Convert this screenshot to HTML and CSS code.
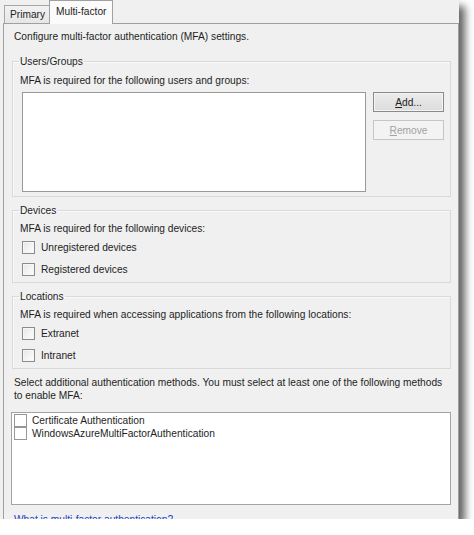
FILE: index.html
```html
<!DOCTYPE html>
<html>
<head>
<meta charset="utf-8">
<title>Multi-factor</title>
<link rel="stylesheet" href="styles.css">
</head>
<body>
<div class="dialog">
  <div class="tabs">
    <div class="tab">Primary</div>
    <div class="tab active">Multi-factor</div>
  </div>
  <div class="panel">
    <p class="intro">Configure multi-factor authentication (MFA) settings.</p>

    <fieldset class="group users">
      <legend>Users/Groups</legend>
      <div class="desc">MFA is required for the following users and groups:</div>
      <div class="users-row">
        <div class="listbox"></div>
        <div class="buttons">
          <button class="btn default" type="button"><u>A</u>dd...</button>
          <button class="btn" type="button" disabled><u>R</u>emove</button>
        </div>
      </div>
    </fieldset>

    <fieldset class="group">
      <legend>Devices</legend>
      <div class="desc">MFA is required for the following devices:</div>
      <label class="check"><span class="box"></span>Unregistered devices</label>
      <label class="check"><span class="box"></span>Registered devices</label>
    </fieldset>

    <fieldset class="group">
      <legend>Locations</legend>
      <div class="desc">MFA is required when accessing applications from the following locations:</div>
      <label class="check"><span class="box"></span>Extranet</label>
      <label class="check"><span class="box"></span>Intranet</label>
    </fieldset>

    <p class="methods-text">Select additional authentication methods. You must select at least one of the following methods to enable MFA:</p>

    <div class="methods-list">
      <label class="item"><span class="box small"></span>Certificate Authentication</label>
      <label class="item"><span class="box small"></span>WindowsAzureMultiFactorAuthentication</label>
    </div>

    <a class="link" href="#">What is multi-factor authentication?</a>
  </div>
</div>
</body>
</html>
```

FILE: styles.css
```css
html, body {
  margin: 0;
  padding: 0;
  background: #ffffff;
}

body {
  font-family: "Liberation Sans", Arial, sans-serif;
  font-size: 10.2px;
  line-height: 15px;
  color: #1e1e1e;
}

.dialog {
  width: 459px;
  height: 519px;
  overflow: hidden;
  background: #f0f0f0;
  box-shadow: 6px 6px 8px rgba(0, 0, 0, 0.62);
}

/* Tabs */
.tabs {
  display: flex;
  align-items: flex-end;
  height: 23px;
  padding-left: 4px;
  position: relative;
  z-index: 1;
}

.tab {
  height: 17px;
  line-height: 17px;
  padding: 0 4px 0 5px;
  border: 1px solid #a7a7a7;
  border-bottom: none;
  background: linear-gradient(#f2f2f2, #e6e6e6);
}

.tab.active {
  height: 23px;
  line-height: 22px;
  padding: 0 6px 0 6px;
  margin-left: -1px;
  margin-bottom: -1px;
  background: #fbfbfb;
  border-color: #a0a0a0;
}

/* Panel */
.panel {
  margin-left: 3px;
  height: 600px;
  border: 1px solid #9f9f9f;
  border-bottom: none;
  padding: 5px 7px 0 8px;
  background: #f0f0f0;
}

.intro {
  margin: 0 0 10px 2px;
}

/* Group boxes */
.group {
  margin: 0;
  border: 1px solid #d9d9d9;
  box-shadow: inset 1px 1px 0 #fafafa;
  padding: 3px 6px 2px 7px;
  min-width: 0;
}

.group + .group {
  margin-top: 6px;
}

.group.users {
  padding-top: 4px;
  padding-bottom: 4px;
}

.group legend {
  padding: 0 1px;
  margin-left: -1px;
  line-height: 15px;
}

.users-row {
  display: flex;
  gap: 7px;
  margin-top: 4px;
  margin-left: 2px;
}

.listbox {
  flex: 1;
  height: 98px;
  background: #ffffff;
  border: 1px solid #9a9a9a;
}

.buttons {
  display: flex;
  flex-direction: column;
  gap: 8px;
  width: 71px;
}

.btn {
  height: 20px;
  padding: 0;
  font: inherit;
  color: #1e1e1e;
  border: 1px solid #8a8a8a;
  background: linear-gradient(#ececec, #dcdcdc);
  box-shadow: inset 0 0 0 1px #f4f4f4;
}

.btn:disabled {
  color: #a2a2a2;
  border-color: #c6c6c6;
  background: #f3f3f3;
  box-shadow: none;
}

/* Checkboxes */
.check {
  display: flex;
  align-items: center;
  height: 22px;
  padding-left: 2px;
  gap: 6px;
}

.box {
  width: 11px;
  height: 11px;
  flex: none;
  border: 1px solid #8c8c8c;
  background: linear-gradient(135deg, #e6e6e6, #ffffff);
  box-shadow: inset 0 0 0 1px #f6f6f6;
}

.methods-text {
  margin: 7px 0 0 2px;
  line-height: 13px;
}

.methods-list {
  margin: 10px 0 0 -1px;
  height: 89px;
  padding: 1px 2px;
  background: #ffffff;
  border: 1px solid #a3a3a3;
}

.item {
  display: flex;
  align-items: center;
  height: 13px;
  gap: 5px;
}

.box.small {
  width: 11px;
  height: 11px;
  border-color: #979797;
  background: #ffffff;
  box-shadow: none;
}

.link {
  display: block;
  margin: 7px 0 0 2px;
  color: #1a40c8;
  text-decoration: none;
}
```
